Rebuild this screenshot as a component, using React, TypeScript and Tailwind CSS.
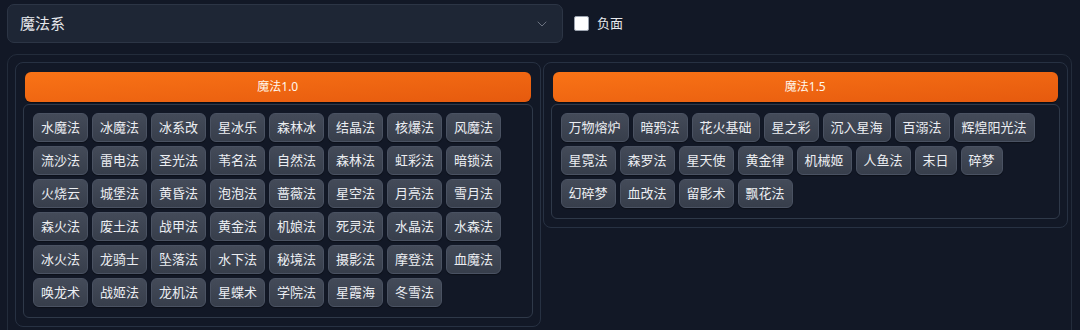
import React from "react";
import { ChevronDown } from "lucide-react";

const groups: { title: string; items: string[] }[] = [
  {
    title: "魔法1.0",
    items: [
      "水魔法", "冰魔法", "冰系改", "星冰乐", "森林冰", "结晶法", "核爆法", "风魔法",
      "流沙法", "雷电法", "圣光法", "苇名法", "自然法", "森林法", "虹彩法", "暗锁法",
      "火烧云", "城堡法", "黄昏法", "泡泡法", "蔷薇法", "星空法", "月亮法", "雪月法",
      "森火法", "废土法", "战甲法", "黄金法", "机娘法", "死灵法", "水晶法", "水森法",
      "冰火法", "龙骑士", "坠落法", "水下法", "秘境法", "摄影法", "摩登法", "血魔法",
      "唤龙术", "战姬法", "龙机法", "星蝶术", "学院法", "星霞海", "冬雪法",
    ],
  },
  {
    title: "魔法1.5",
    items: [
      "万物熔炉", "暗鸦法", "花火基础", "星之彩", "沉入星海", "百溺法", "辉煌阳光法",
      "星霓法", "森罗法", "星天使", "黄金律", "机械姬", "人鱼法", "末日", "碎梦",
      "幻碎梦", "血改法", "留影术", "飘花法",
    ],
  },
];

function Chip({ label }: { label: string }) {
  return (
    <div className="h-[29px] px-[7px] flex items-center rounded-[6px] border border-[#4a5262] bg-gradient-to-b from-[#444b59] to-[#373e4b] text-[13px] leading-none text-[#eceef2] whitespace-nowrap shadow-[0_1px_1px_rgba(0,0,0,0.35)]">
      {label}
    </div>
  );
}

function Column({ title, items }: { title: string; items: string[] }) {
  return (
    <div className="rounded-[8px] border border-[#273142] px-[7px] pt-[9px] pb-[8px]">
      <div className="mx-[2px] h-[30px] rounded-[6px] bg-gradient-to-br from-[#f97316] to-[#e65a0e] flex items-center justify-center text-[12px] text-[#fff7ed] shadow-[0_1px_0_rgba(0,0,0,0.4)]">
        {title}
      </div>
      <div className="mt-[2px] rounded-[6px] border border-[#2f3949] px-[9px] pt-[8px] pb-[10px] flex flex-wrap gap-[4px]">
        {items.map((it) => (
          <Chip key={it} label={it} />
        ))}
      </div>
    </div>
  );
}

export default function App() {
  return (
    <div className="min-h-screen bg-[#121826] px-[7px] pt-[4px] font-['Noto_Sans','Noto_Sans_CJK_SC',sans-serif]">
      <div className="flex items-center h-[39px]">
        <div className="w-[556px] h-[39px] rounded-[7px] border border-[#2c3545] bg-[#1e2635] flex items-center justify-between pl-[12px] pr-[12px]">
          <span className="text-[15px] text-[#e6e8ec]">魔法系</span>
          <ChevronDown size={16} strokeWidth={1.5} className="text-[#6b7280]" />
        </div>
        <label className="ml-[11px] flex items-center gap-[8px]">
          <span className="w-[15px] h-[15px] rounded-[2px] bg-white border border-[#9ca3af]" />
          <span className="text-[13px] text-[#e6e8ec]">负面</span>
        </label>
      </div>
      <div className="mt-[11px] mr-px rounded-[10px] border border-[#232c3b] pl-[7px] pt-[7px] pr-[3px] pb-[12px]">
        <div className="grid grid-cols-2 gap-[2px] items-start">
          {groups.map((g) => (
            <Column key={g.title} title={g.title} items={g.items} />
          ))}
        </div>
      </div>
    </div>
  );
}
